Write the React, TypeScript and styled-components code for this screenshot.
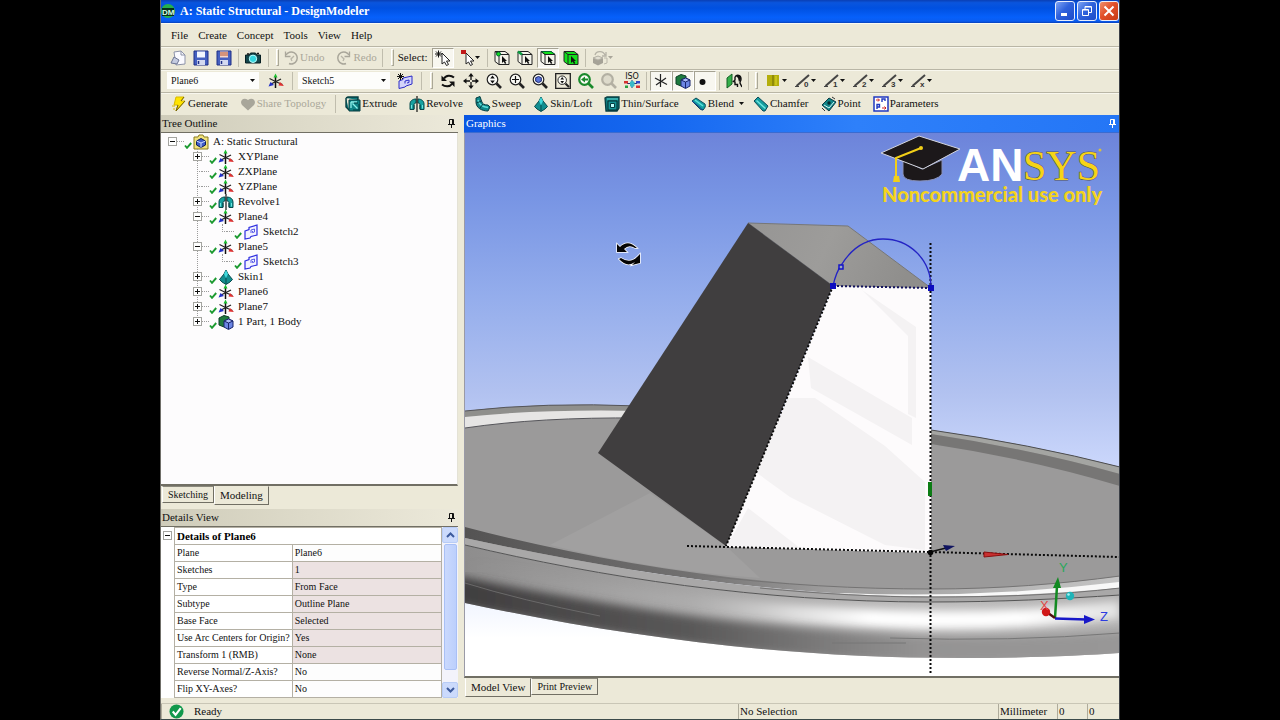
import React from "react";
import styled, { createGlobalStyle, css } from "styled-components";

const GlobalStyle = createGlobalStyle`
  *, *::before, *::after { box-sizing: border-box; }
  body { margin: 0; background: #000; }
  button, select, table { font: inherit; color: inherit; }
`;

const serif = `"Liberation Serif", "Noto Sans CJK TC", serif`;

const AppWindow = styled.div`
  width: 75%;
  min-height: 100vh;
  margin: 0 auto;
  display: flex;
  flex-direction: column;
  background: #ece9d8;
  border-left: 1px solid #6f6e68;
  border-right: 1px solid #3b3f46;
  border-bottom: 1px solid #3b4a4a;
  font-family: ${serif};
  font-size: 11px;
  line-height: 15px;
  color: #111;
`;

/* ---------- title bar ---------- */

const TitleBar = styled.header`
  display: flex;
  align-items: center;
  height: 23px;
  padding-bottom: 2px;
  background: linear-gradient(#0a3fb4, #0a55dd 12%, #0050e0 35%, #0660fb 75%, #0a5cf0 92%, #0840b8);
`;

const TitleText = styled.h1`
  flex: 1;
  margin: 0 0 0 5px;
  font-size: 12px;
  line-height: 20px;
  color: #fff;
`;

const CaptionButton = styled.button<{ $close?: boolean }>`
  width: 20px;
  height: 20px;
  margin-left: 2px;
  padding: 0;
  border: 1px solid #e8eefc;
  border-radius: 3px;
  background: ${(p) =>
    p.$close
      ? "linear-gradient(135deg, #f0906c, #e2502a 45%, #c83a14)"
      : "linear-gradient(135deg, #7fa4f4, #2f62dc 45%, #1d4bc8)"};
  svg { display: block; margin: 0 auto; }
`;

/* ---------- menu and tool bars ---------- */

const MenuBar = styled.nav`
  display: flex;
  align-items: center;
  gap: 10px;
  height: 23px;
  padding-left: 10px;
  border-top: 1px solid #fbfaf2;
`;

const MenuItem = styled.button`
  padding: 0;
  border: 0;
  background: none;
  line-height: 15px;
`;

const ToolBar = styled.div`
  display: flex;
  align-items: center;
  height: 23px;
  padding: 0 0 1px 6px;
  border-top: 1px solid #b9b6a6;
  box-shadow: inset 0 1px 0 #f8f7ee;
`;

const Group = styled.div<{ $gap?: number; $inset?: number }>`
  display: flex;
  align-items: center;
  gap: ${(p) => p.$gap ?? 1}px;
  padding-left: ${(p) => p.$inset ?? 0}px;
`;

const Divider = styled.span<{ $space?: number }>`
  width: 1px;
  height: 18px;
  margin: 0 ${(p) => p.$space ?? 3}px;
  background: #c0bdad;
`;

const Grip = styled.span`
  width: 3px;
  height: 17px;
  margin: 0 4px 0 3px;
  border: 1px solid;
  border-color: #fff #aaa797 #aaa797 #fff;
`;

const ToolButton = styled.button<{ $pressed?: boolean; $menu?: boolean }>`
  display: flex;
  align-items: center;
  justify-content: center;
  flex: none;
  width: ${(p) => (p.$menu ? 28 : 22)}px;
  height: 20px;
  padding: 0;
  border: 1px solid transparent;
  background: none;
  ${(p) =>
    p.$pressed &&
    css`
      background: #f8f7f0;
      border-color: #a5a292 #fff #fff #a5a292;
    `}
  svg { flex: none; }
`;

const TextButton = styled.button`
  display: flex;
  align-items: center;
  gap: 1px;
  flex: none;
  padding: 0;
  border: 0;
  background: none;
  white-space: nowrap;
  &:disabled { color: #aaa798; }
`;

const MenuCaret = styled.span`
  display: flex;
  margin: 0 -3px 0 4px;
`;

const ToolLabel = styled.span`
  width: 34px;
`;

const Combo = styled.label`
  position: relative;
  display: block;
  width: 92px;
  select {
    appearance: none;
    width: 100%;
    height: 17px;
    padding: 0 4px;
    border: 0;
    border-radius: 0;
    background: #fdfdfb;
    font-size: 10px;
  }
  svg { position: absolute; right: 4px; top: 7px; pointer-events: none; }
`;

/* ---------- work area ---------- */

const WorkArea = styled.main`
  flex: 1;
  display: grid;
  grid-template-columns: 297px 1fr;
  column-gap: 6px;
`;

const Column = styled.div`
  display: flex;
  flex-direction: column;
  min-width: 0;
`;

const PaneHeader = styled.h2<{ $active?: boolean }>`
  display: flex;
  align-items: center;
  justify-content: space-between;
  height: 18px;
  margin: 0;
  padding: 0 3px 0 1px;
  font-size: 11px;
  font-weight: normal;
  line-height: 15px;
  border-bottom: 1px solid #716f64;
  background: linear-gradient(90deg, #cfccba, #dedbca 50%, #ece9da);
  ${(p) =>
    p.$active &&
    css`
      padding-left: 2px;
      color: #fff;
      border-bottom-color: #3a6bd0;
      background: linear-gradient(90deg, #0a56e2, #1668f0 30%, #2e80fa 60%, #2476f6);
    `}
`;

const TreePane = styled.section`
  flex: 1;
  padding: 1px 0 0 7px;
  background: #fdfcfd;
  border-right: 1px solid #e4e2d6;
  border-bottom: 2px solid #716f64;
`;

const Branch = styled.ul`
  position: relative;
  margin: 0;
  padding: 0;
  list-style: none;
  & & { padding-left: 25px; }
  & &::before {
    content: "";
    position: absolute;
    left: 29px;
    top: 0;
    bottom: 7px;
    border-left: 1px dotted #9c9c9c;
  }
`;

const TreeRow = styled.div`
  display: flex;
  align-items: center;
  height: 15px;
`;

const Toggle = styled.button`
  position: relative;
  flex: none;
  width: 9px;
  height: 9px;
  padding: 0;
  border: 1px solid #a4a4a0;
  background: #fff;
  svg { display: block; }
`;

const ToggleGap = styled.span`
  width: 5px;
  margin-left: 4px;
  border-top: 1px dotted #9c9c9c;
`;

const Stem = styled.span`
  width: 7px;
  border-top: 1px dotted #9c9c9c;
`;

const CheckSlot = styled.span`
  display: flex;
  align-self: flex-end;
  width: 9px;
`;

const NodeLabel = styled.span`
  margin-left: 4px;
`;

const TabStrip = styled.div<{ $tall?: boolean }>`
  display: flex;
  align-items: flex-start;
  height: ${(p) => (p.$tall ? 25 : 23)}px;
  padding-left: 1px;
`;

const Tab = styled.button<{ $current?: boolean }>`
  height: ${(p) => (p.$current ? 19 : 17)}px;
  padding: 0 5px;
  border: 1px solid;
  border-color: ${(p) => (p.$current ? "transparent" : "#8a887c")} #716f64 #716f64 #fff;
  background: #ece9d8;
  font-size: ${(p) => (p.$current ? 11 : 10)}px;
  line-height: 15px;
`;

const DetailsPane = styled.section`
  display: flex;
  margin-bottom: 5px;
  background: #fff;
`;

const DetailsTable = styled.table`
  flex: 1;
  border-collapse: collapse;
  table-layout: fixed;
  font-size: 10px;
  line-height: 14px;
  th, td {
    height: 17px;
    padding: 0 2px 1px;
    border: 1px solid #b4b0a4;
    text-align: left;
    font-weight: normal;
    white-space: nowrap;
  }
  thead th { font-size: 11px; font-weight: bold; color: #000; }
`;

const GutterCell = styled.td`
  && { width: 13px; padding: 0 1px; border-color: transparent #b4b0a4 transparent transparent; }
`;

const ValueCell = styled.td<{ $locked?: boolean }>`
  width: 151px;
  background: ${(p) => (p.$locked ? "#ece2e2" : "#fdfdfd")};
`;

const ScrollTrack = styled.div`
  display: flex;
  flex-direction: column;
  width: 16px;
  background: #f3f3fb;
`;

const ScrollArrow = styled.button`
  display: flex;
  align-items: center;
  justify-content: center;
  height: 16px;
  padding: 0;
  border: 1px solid #b8ccf6;
  border-radius: 2px;
  background: #cbdafc;
`;

const ScrollThumb = styled.div`
  flex: 1;
  margin: 1px 1px 12px 2px;
  border: 1px solid #a9c0f6;
  border-radius: 2px;
  background: linear-gradient(90deg, #cad9fd, #bccffc);
`;

const Viewport = styled.section`
  flex: 1;
  display: flex;
  border-left: 1px solid #9a9aa6;
  border-bottom: 2px solid #716f64;
  svg { display: block; width: 100%; height: auto; }
`;

const StatusBar = styled.footer`
  display: flex;
  gap: 3px;
  height: 16px;
  border-top: 1px solid #c9c6b6;
`;

const StatusPane = styled.div<{ $width?: number }>`
  display: flex;
  align-items: center;
  flex: ${(p) => (p.$width ? `0 0 ${p.$width}px` : "1")};
  padding-left: 1px;
  border-left: 1px solid #aeab9b;
  gap: 10px;
`;

/* ---------- icons ---------- */

const Svg = ({ children }: { children: React.ReactNode }) => (
  <svg width="16" height="16" viewBox="0 0 16 16" fill="none" aria-hidden="true">
    {children}
  </svg>
);

const Caret = ({ color = "#111" }: { color?: string }) => (
  <svg width="5" height="3" viewBox="0 0 5 3" aria-hidden="true">
    <path d="M0 0h5L2.500 3z" fill={color} />
  </svg>
);

const PinIcon = () => (
  <svg width="7" height="9" viewBox="0 0 7 9" fill="none" aria-hidden="true">
    <path d="M1.500 .5h4v5M1.500 .5v5M0 5.500h7M3.500 5.500v3.500M4.500 1v4" stroke="currentColor" />
  </svg>
);

const CheckIcon = () => (
  <svg width="8" height="7" viewBox="0 0 8 7" fill="none" aria-hidden="true">
    <path d="M1 3.500l2 2.300L7.200 1" stroke="#1c9a30" strokeWidth="1.900" />
  </svg>
);

const PlaneIcon = () => (
  <Svg>
    <path d="M7.500 3v12" stroke="#111" strokeWidth="1.500" />
    <path d="M1.500 5.500l7 3.500 6 2.500" stroke="#222" strokeWidth="1.200" />
    <path d="M13 6L3 11" stroke="#222" strokeWidth="1.300" />
    <path d="M5.500 4.500L7.500 .5l2 4z" fill="#1cc030" />
    <path d="M.5 13.500l2-4.500 3.500 3z" fill="#2230c8" />
    <path d="M10.500 12.500l1.500-3.500 4 4z" fill="#e03030" />
  </Svg>
);

const SketchIcon = () => (
  <Svg>
    <path d="M2 7l4-1.500V3.500L14 1v10l-6 1.500-1 1.500-5 1z" fill="#f2f2ff" stroke="#2c2ce0" strokeWidth="1.200" />
    <path d="M8 9V6l3.500-1v3l-2 .6V7" stroke="#5a5ae8" />
  </Svg>
);

const RevolveIcon = () => (
  <Svg>
    <path d="M1 13.500V8c0-3 2.500-5 6-5v4c-1.500 0-2 .6-2 2v4.500zM15 13.500V8c0-3-2.500-5-6-5v4c1.500 0 2 .6 2 2v4.500z" fill="#16a0a0" stroke="#064a4c" />
    <path d="M8 0v16" stroke="#111" strokeWidth="1.200" />
    <path d="M5 13V9M11 13V9" stroke="#064a4c" />
    <path d="M2.500 12.500V9M13.500 12.500V9" stroke="#6fe4e0" />
  </Svg>
);

const SkinIcon = () => (
  <Svg>
    <path d="M8 1l2 4 4.500 5.500L12 13l-4 2.500L4 13l-2.500-2.500L6 5z" fill="#128e90" stroke="#064a4c" />
    <path d="M8 1l2 4-2 4-2-4z" fill="#3fd8dc" />
    <path d="M8 9v6" stroke="#064a4c" />
  </Svg>
);

const BodyIcon = () => (
  <Svg>
    <path d="M1 4l5-2.500L11 3v8l-5 2-5-2z" fill="#1d7a3e" stroke="#0e3f26" />
    <path d="M6 7l4.500-2L15 7v6l-4.500 2.500L6 13z" fill="#6c86e4" stroke="#18246c" />
    <path d="M6 7l4.500 2L15 7l-4.500-2z" fill="#aabcf8" stroke="#18246c" />
    <path d="M10.500 9v6" stroke="#18246c" />
  </Svg>
);

const ProjectIcon = () => (
  <Svg>
    <path d="M1 3h4l1-2h4l1 2h4v12H1z" fill="#f0e27c" stroke="#8a7a1c" />
    <path d="M3.500 7L8 4.500 12.500 7v4L8 13.500 3.500 11z" fill="#3f5cc8" stroke="#0d1c58" />
    <path d="M3.500 7L8 9l4.500-2M8 9v4.500" stroke="#cfdcff" />
  </Svg>
);

const ExtrudeIcon = () => (
  <Svg>
    <path d="M1 2l2-1h10v3M1 2v9l3 3" stroke="#053c40" strokeWidth="1.400" fill="#0f7c7e" />
    <path d="M4 4h11v11H4z" fill="#0f8486" stroke="#053c40" />
    <path d="M6 6h6M6 6v6M7.500 7.500l5 5" stroke="#8ff0ea" strokeWidth="1.300" />
    <path d="M14 8v6H8M9 7h4" stroke="#053c40" />
  </Svg>
);

const SweepIcon = () => (
  <Svg>
    <path d="M1 2l4-1.500 1.500 4.500C7.500 8 9 9 13 9l2 2-2 4C7 15 1 12 1 6z" fill="#11898a" stroke="#053c40" />
    <path d="M3 4c1 4 4 7 10 7.500" stroke="#5fe0dc" strokeWidth="1.400" />
    <path d="M1.500 7l5-2M5 12l3-4" stroke="#053c40" />
  </Svg>
);

const ThinIcon = () => (
  <Svg>
    <path d="M1 2l2-1h12v11l-2 3H2z" fill="#0e7a7c" stroke="#053c40" strokeWidth="1.300" />
    <path d="M4 5h9v9H4z" fill="#149294" stroke="#042c30" />
    <path d="M6.500 7.500h4v4h-4z" fill="#bff" stroke="#053c40" />
    <path d="M3 3h11" stroke="#5fe0dc" />
  </Svg>
);

const BlendIcon = () => (
  <Svg>
    <path d="M1 5l4-3 9 6c1 2 0 4-2 6-1 0-3-.5-4-2z" fill="#14a0a2" stroke="#0a4a58" />
    <path d="M1 5l8 6.500c1 1 2 2 3 2.500" stroke="#1c3c90" />
    <path d="M4 4l8 6" stroke="#5fe0dc" strokeWidth="1.500" />
  </Svg>
);

const ChamferIcon = () => (
  <Svg>
    <path d="M1 5l4-4 10 9-3 5h-2z" fill="#149c9e" stroke="#0a4a58" />
    <path d="M3.500 4.500l9 8" stroke="#6fe6e0" strokeWidth="1.500" />
  </Svg>
);

const PointIcon = () => (
  <Svg>
    <path d="M1 9l7-7 7 4-7 9z" fill="#128688" stroke="#0a3a44" />
    <path d="M3 9l5 3 5-6" stroke="#d8f8f6" />
    <circle cx="8" cy="7" r="1.700" fill="#052c30" />
    <path d="M1 12l3 3M11 1l3 2" stroke="#333" />
  </Svg>
);

const ParametersIcon = () => (
  <Svg>
    <path d="M1 1h14v14H1z" fill="#fff" stroke="#2038c0" strokeWidth="1.500" />
    <path d="M3 4h3M5 2.500L6.500 4 5 5.500M9 12h4M11.500 10.500L13 12l-1.500 1.500" stroke="#d02020" />
    <path d="M9 6V3h3v2M4 13V8.500h2.500V11H4" stroke="#2038c0" strokeWidth="1.400" />
  </Svg>
);

const BoltIcon = () => (
  <Svg>
    <path d="M5 1h8l-3 4h4L5 15l2-6H3z" fill="#ffe400" stroke="#d8b800" />
    <path d="M13 1l-3 4M14 5L5 15l2-6" stroke="#77650a" />
    <path d="M1 10h3M2 13h2" stroke="#d8b800" />
  </Svg>
);

const HeartIcon = () => (
  <Svg>
    <path d="M8 14.500L2 9C-1 5 3.500 .5 8 4 12.500 .5 17 5 14 9z" fill="#a8a69a" />
  </Svg>
);

const NewIcon = () => (
  <Svg>
    <path d="M4 2l7-1 4 4v9l-9 1z" fill="#fafaff" stroke="#8d93a8" />
    <path d="M11 1v4h4" stroke="#8d93a8" />
    <path d="M1 13l3-6 5 3-2 4z" fill="#c4cbe0" stroke="#6d7694" />
  </Svg>
);

const SaveIcon = ({ striped }: { striped?: boolean }) => (
  <Svg>
    <path d="M1 1h14v14H1z" fill="#4560c0" stroke="#1f2f86" />
    <path d="M4 1.500h8v6H4z" fill={striped ? "#f6d6c8" : "#f2f6ff"} />
    {striped && <path d="M4 3h8M4 5h8" stroke="#b05030" />}
    <path d="M4 10h8v5H4z" fill="#d4daf0" />
    <path d="M5.500 11v3" stroke="#1f2f86" strokeWidth="1.500" />
  </Svg>
);

const CameraIcon = () => (
  <Svg>
    <path d="M.5 5H4l1.500-2h5L12 5h3.500v8H.5z" fill="#14464c" stroke="#071e22" />
    <circle cx="8" cy="8.800" r="3.700" fill="#35d4dc" stroke="#bff" />
    <path d="M2 4h2M12 3.500h2" stroke="#111" strokeWidth="1.500" />
  </Svg>
);

const TurnIcon = ({ redo }: { redo?: boolean }) => (
  <Svg>
    <g transform={redo ? "translate(16 0) scale(-1 1)" : undefined}>
      <path d="M3 5A6 6 0 1 1 6 13.500" stroke="#a9a69a" strokeWidth="1.500" />
      <path d="M2.500 1.500v5h5" stroke="#a9a69a" strokeWidth="1.300" />
      <path d="M11 6l-3 3 1 2" stroke="#b8b5a8" strokeWidth="1.300" />
    </g>
  </Svg>
);

const PointerIcon = ({ red }: { red?: boolean }) => (
  <Svg>
    <path d="M7 3v11l2.500-2 2 3.500 2-1-2-3.500H15z" fill="#fff" stroke="#222" />
    {red ? (
      <path d="M2 0h5v4H2z" fill="#c01818" />
    ) : (
      <path d="M0 4h7M3.500 .5v7M1 1.500l5 5M6 1.500l-5 5" stroke="#111" />
    )}
  </Svg>
);

const FilterCube = ({ kind }: { kind: "point" | "edge" | "face" | "body" }) => {
  const green = "#12e01c";
  return (
    <Svg>
      <path d="M1 1.500h10l4 3v10H5l-4-3z" fill={kind === "body" ? green : "#f4f3ea"} stroke="#222" />
      {kind === "face" && <path d="M1 1.500h10l4 3H5z" fill={green} stroke="#063" />}
      <path d="M1 1.500l4 3h10M5 4.500v10" stroke="#222" />
      {kind === "point" && <circle cx="4.500" cy="4" r="2" fill={green} stroke="#063" />}
      {kind === "edge" && <path d="M1 1.500l4 3" stroke="#0a9c40" strokeWidth="2.500" />}
      <path d="M8 6v7l1.600-1.400L11 14l1.300-.7-1.200-2.300H13z" fill="#111" />
    </Svg>
  );
};

const GreyCube = () => (
  <Svg>
    <path d="M1 8l5-2 5 2v5l-5 2.500L1 13z" fill="#a5a297" />
    <path d="M1 8l5-2 5 2-5 2z" fill="#e2dfd2" stroke="#b5b2a6" />
    <path d="M3 5c1-4 8-5 10 0M14 2v4h-4" stroke="#b5b2a6" strokeWidth="1.300" />
    <path d="M12 8h3v5l-3 1" stroke="#bbb8ab" />
  </Svg>
);

const NewSketchIcon = () => (
  <Svg>
    <path d="M2 8l4-1.500V5l9-2v8l-6 2-1 1-6 1.500z" fill="#d4d4fa" stroke="#2c2cc8" />
    <path d="M8 10.500V8l4-1v2.500L10 10" stroke="#2c2cc8" />
    <path d="M0 3.500h7M3.500 0v7M1 1l5 5M6 1L1 6" stroke="#111" />
  </Svg>
);

const RotateIcon = () => (
  <Svg>
    <path d="M4 5.500C6 2 11 2 14 4.500M2 11.500C5 14 10 14 12 11" stroke="#111" strokeWidth="2" />
    <path d="M1.500 2.500V8H7zM14.500 14V8.500H9z" fill="#111" />
  </Svg>
);

const PanIcon = () => (
  <Svg>
    <path d="M8 3v4M8 9v4M3 8h4M9 8h4" stroke="#111" strokeWidth="1.300" />
    <path d="M8 0l2.700 3.500H5.300zM8 16l2.700-3.500H5.300zM0 8l3.500-2.700v5.400zM16 8l-3.500-2.700v5.400z" fill="#111" />
  </Svg>
);

type LensKind = "zoom" | "plus" | "box" | "fit" | "green" | "grey";
const LensIcon = ({ kind }: { kind: LensKind }) => {
  const rim = kind === "green" ? "#1a8a2c" : kind === "grey" ? "#b3b0a3" : "#222";
  return (
    <Svg>
      {kind === "fit" && <path d="M.7 .7h14.600v14.600H.7z" stroke="#222" strokeWidth="1.300" />}
      <g transform={kind === "fit" ? "translate(2 2) scale(.8)" : undefined}>
        <path d="M10.500 10.500L15 15" stroke={rim} strokeWidth="2.600" />
        <circle cx="6.500" cy="6.500" r="5.300" fill={kind === "grey" ? "#dddacb" : "#fbfbf6"} stroke={rim} strokeWidth={kind === "green" || kind === "grey" ? 2.200 : 1.200} />
        {(kind === "zoom" || kind === "fit") && (
          <path d="M6.500 2.500l2.300 3H4.200zM6.500 10.500l2.300-3H4.200z" fill="#111" />
        )}
        {kind === "plus" && <path d="M6.500 3v7M3 6.500h7" stroke="#111" strokeWidth="1.200" />}
        {kind === "box" && <path d="M3.700 4.700l2.800-1.200 2.800 1.200v3.500L6.500 9.700 3.700 8.200z" fill="#5a74d8" stroke="#18246c" />}
        {kind === "green" && <path d="M3 6.500l4-3v2h3v2H7v2z" fill="#1a8a2c" />}
      </g>
    </Svg>
  );
};

const IsoText = styled.span`
  font: 8px/7px "DejaVu Sans", sans-serif;
`;
const IsoButton = styled(ToolButton)`
  flex-direction: column;
`;
const IsoGlyph = () => (
  <svg width="16" height="9" viewBox="0 0 16 9" fill="none" aria-hidden="true">
    <path d="M3 3.500h10M8 0v8" stroke="#237" />
    <path d="M0 1h4v2.500H0zM12 5.500h4V8h-4z" fill="#d43030" />
    <path d="M1 5.500h3V8H1z" fill="#28a040" />
    <path d="M6 2l2-1.500L10.500 2v4L8 7.500 6 6z" fill="#39b8c8" />
    <path d="M12 1h4v2.500h-4z" fill="#3048c8" />
  </svg>
);

const AxesIcon = () => (
  <Svg>
    <path d="M7.500 1v13M2 5l12 6.500M13 5L3 12" stroke="#222" strokeWidth="1.200" />
  </Svg>
);

const DotIcon = () => (
  <Svg>
    <circle cx="5.500" cy="9" r="3" fill="#111" />
  </Svg>
);

const LookIcon = () => (
  <Svg>
    <path d="M1 5l5-4v10l-5 4z" fill="#35b04a" stroke="#146024" />
    <path d="M9 4c2-3 6-2 6 2 0 2-1 2-1 4l2 4M9 4v3l-1.500 1.500L9 9v2.500h2.500V14" stroke="#111" strokeWidth="1.400" />
    <path d="M10 3c3-2 5 0 5 3l-2 3-1-4z" fill="#111" />
  </Svg>
);

const SwatchIcon = () => (
  <Svg>
    <path d="M1 2h12v11H1z" fill="#b4ae0c" />
    <path d="M7 2v11" stroke="#6c6806" />
    <path d="M10 3v9" stroke="#c8c41c" strokeWidth="2" />
  </Svg>
);

const EdgeText = styled.text`
  font: bold 8px "Liberation Sans", sans-serif;
`;
const EdgeIcon = ({ mark }: { mark: string }) => (
  <Svg>
    <path d="M1.500 13L14 2" stroke="#444" strokeWidth="2" />
    <path d="M0 13.500h4" stroke="#444" />
    <EdgeText x="9" y="14" fill="#333">{mark}</EdgeText>
  </Svg>
);

const IconText = styled.text`
  font: bold 8px "Liberation Sans", sans-serif;
  fill: #d8ffe4;
`;
const AppIcon = () => (
  <svg width="14" height="16" viewBox="0 0 14 16" aria-hidden="true">
    <circle cx="7" cy="8" r="7" fill="#25b04c" />
    <path d="M1 5h12v8H1z" fill="#06301a" />
    <IconText x="1" y="12">DM</IconText>
  </svg>
);

const ReadyMark = styled.svg`
  margin-left: 6px;
`;
const ReadyIcon = () => (
  <ReadyMark width="15" height="15" viewBox="0 0 16 16" fill="none" aria-hidden="true">
    <circle cx="8" cy="8" r="7.500" fill="#12984c" />
    <path d="M4 8l3 3.500L12.500 4.500" stroke="#fff" strokeWidth="2.200" />
  </ReadyMark>
);

/* ---------- data ---------- */

type TreeNode = { label: string; icon: () => React.ReactElement; open?: boolean; leaf?: boolean; children?: TreeNode[] };

const tree: TreeNode = {
  label: "A: Static Structural",
  icon: ProjectIcon,
  open: true,
  children: [
    { label: "XYPlane", icon: PlaneIcon },
    { label: "ZXPlane", icon: PlaneIcon, leaf: true },
    { label: "YZPlane", icon: PlaneIcon, leaf: true },
    { label: "Revolve1", icon: RevolveIcon },
    { label: "Plane4", icon: PlaneIcon, open: true, children: [{ label: "Sketch2", icon: SketchIcon, leaf: true }] },
    { label: "Plane5", icon: PlaneIcon, open: true, children: [{ label: "Sketch3", icon: SketchIcon, leaf: true }] },
    { label: "Skin1", icon: SkinIcon },
    { label: "Plane6", icon: PlaneIcon },
    { label: "Plane7", icon: PlaneIcon },
    { label: "1 Part, 1 Body", icon: BodyIcon },
  ],
};

const details: { name: string; value: string; locked?: boolean }[] = [
  { name: "Plane", value: "Plane6" },
  { name: "Sketches", value: "1", locked: true },
  { name: "Type", value: "From Face", locked: true },
  { name: "Subtype", value: "Outline Plane", locked: true },
  { name: "Base Face", value: "Selected", locked: true },
  { name: "Use Arc Centers for Origin?", value: "Yes", locked: true },
  { name: "Transform 1 (RMB)", value: "None", locked: true },
  { name: "Reverse Normal/Z-Axis?", value: "No" },
  { name: "Flip XY-Axes?", value: "No" },
];

const features: { label: string; icon: () => React.ReactElement; menu?: boolean }[] = [
  { label: "Extrude", icon: ExtrudeIcon },
  { label: "Revolve", icon: RevolveIcon },
  { label: "Sweep", icon: SweepIcon },
  { label: "Skin/Loft", icon: SkinIcon },
  { label: "Thin/Surface", icon: ThinIcon },
  { label: "Blend", icon: BlendIcon, menu: true },
  { label: "Chamfer", icon: ChamferIcon },
  { label: "Point", icon: PointIcon },
  { label: "Parameters", icon: ParametersIcon },
];

const ToggleMark = ({ open }: { open?: boolean }) => (
  <svg width="7" height="7" viewBox="0 0 7 7" aria-hidden="true">
    <path d={open ? "M1 3.500h5" : "M1 3.500h5M3.500 1v5"} stroke="#111" />
  </svg>
);

const TreeItem = ({ node }: { node: TreeNode }) => {
  const Icon = node.icon;
  return (
    <li>
      <TreeRow>
        {node.leaf ? (
          <ToggleGap />
        ) : (
          <Toggle aria-label={`${node.open ? "Collapse" : "Expand"} ${node.label}`}>
            <ToggleMark open={node.open} />
          </Toggle>
        )}
        <Stem />
        <CheckSlot><CheckIcon /></CheckSlot>
        <Icon />
        <NodeLabel>{node.label}</NodeLabel>
      </TreeRow>
      {node.children && (
        <Branch>
          {node.children.map((child) => <TreeItem key={child.label} node={child} />)}
        </Branch>
      )}
    </li>
  );
};

/* ---------- 3D scene ---------- */

const BrandSans = styled.text`
  font: bold 46px "Liberation Sans", sans-serif;
  fill: #fff;
`;
const BrandSerif = styled.text`
  font: 42px "Liberation Serif", serif;
  fill: #f6d416;
  stroke: #55545c;
  stroke-width: 1px;
  paint-order: stroke;
`;
const BrandNote = styled.text`
  font: 900 20px Lato, "Liberation Sans", sans-serif;
  fill: #f4d31c;
`;
const AxisText = styled.text`
  font: 13px "Liberation Sans", sans-serif;
`;

const Scene = () => (
  <svg viewBox="465 133 654 543" role="img" aria-label="Model of a wedge standing on a disc">
    <defs>
      <linearGradient id="sky" x1="0" y1="133" x2="0" y2="676" gradientUnits="userSpaceOnUse">
        <stop offset="0" stopColor="#6d84da" />
        <stop offset=".12" stopColor="#7895e4" />
        <stop offset=".3" stopColor="#94adec" />
        <stop offset=".48" stopColor="#b2c2f0" />
        <stop offset=".62" stopColor="#ccd8fc" />
        <stop offset=".85" stopColor="#eef3ff" />
        <stop offset=".93" stopColor="#ffffff" />
      </linearGradient>
      <linearGradient id="top" x1="760" y1="225" x2="900" y2="290" gradientUnits="userSpaceOnUse">
        <stop offset="0" stopColor="#979695" />
        <stop offset=".45" stopColor="#9d9c9a" />
        <stop offset="1" stopColor="#8f8e8c" />
      </linearGradient>
      <linearGradient id="rimBase" x1="465" y1="0" x2="1119" y2="0" gradientUnits="userSpaceOnUse">
        <stop offset="0" stopColor="#8e8d8d" />
        <stop offset=".35" stopColor="#a6a5a5" />
        <stop offset=".7" stopColor="#bcbbbb" />
        <stop offset="1" stopColor="#b2b1b1" />
      </linearGradient>
      <linearGradient id="rimDark" x1="465" y1="0" x2="1119" y2="0" gradientUnits="userSpaceOnUse">
        <stop offset="0" stopColor="#403e3f" />
        <stop offset=".35" stopColor="#5a5959" />
        <stop offset=".55" stopColor="#7c7b7b" />
        <stop offset=".7" stopColor="#949393" />
        <stop offset="1" stopColor="#989797" />
      </linearGradient>
      <linearGradient id="rimLight" x1="465" y1="0" x2="1119" y2="0" gradientUnits="userSpaceOnUse">
        <stop offset="0" stopColor="#b8b8b8" stopOpacity="0" />
        <stop offset=".35" stopColor="#c4c4c4" stopOpacity=".25" />
        <stop offset=".5" stopColor="#f0f0f0" stopOpacity=".7" />
        <stop offset=".62" stopColor="#fff" />
        <stop offset=".85" stopColor="#fff" />
        <stop offset="1" stopColor="#e2e2e2" />
      </linearGradient>
      <linearGradient id="lipDark" x1="465" y1="0" x2="1119" y2="0" gradientUnits="userSpaceOnUse">
        <stop offset="0" stopColor="#545353" />
        <stop offset=".35" stopColor="#727171" />
        <stop offset=".55" stopColor="#9d9c9c" />
        <stop offset="1" stopColor="#c4c4c4" />
      </linearGradient>
      <filter id="soft" x="-5%" y="-30%" width="110%" height="160%"><feGaussianBlur stdDeviation="4" /></filter>
      <clipPath id="rimClip">
        <path d="M465 545C600 577 760 602 930 602C1000 602 1060 599 1120 595V653C1080 656 1020 658 960 658C780 658 620 636 465 603Z" />
      </clipPath>
    </defs>

    <path d="M465 133h655v544H465z" fill="url(#sky)" />

    {/* disc floor */}
    <path d="M465 411Q545 402 632 406L931 430Q1030 444 1120 467V595C1000 605 800 600 465 545Z" fill="#9b9a9a" />
    <path d="M465 411Q545 402 640 406V411Q540 409 465 417Z" fill="#8f8f8c" />
    <path d="M465 417Q540 409 640 411V418Q540 417 465 428Z" fill="#e6e5e4" />
    <path d="M465 411Q545 402 640 406M465 428Q540 417 640 418" stroke="#55555a" fill="none" />
    <path d="M931 430Q1030 444 1120 467V474Q1030 449 931 434Z" fill="#a4a5a2" />
    <path d="M931 434Q1030 449 1120 474V486Q1030 459 931 444Z" fill="#777675" />
    <path d="M931 430Q1030 444 1120 467" stroke="#4c4d50" fill="none" />
    <path d="M550 545L650 493L726 546L760 578Q650 570 550 545Z" fill="#a1a0a0" />

    {/* inner lip */}
    <path d="M465 527C600 562 760 589 930 589C1000 589 1060 584 1120 576V588C1060 595 1000 597 930 597C760 595 600 567 465 538Z" fill="url(#lipDark)" />
    <path d="M840 593Q980 599 1120 582V588Q980 601 840 594Z" fill="#f8f8f8" />
    <path d="M465 538C600 567 760 595 930 597C1000 597 1060 595 1120 588V595C1060 600 1000 602 930 602C760 602 600 577 465 545Z" fill="#a9a8a8" />
    <path d="M700 575C780 585 860 589 930 589C1000 589 1060 584 1120 576M760 588C820 594 880 597 930 597C1000 597 1060 595 1120 588" stroke="#747373" fill="none" />

    {/* outer rim */}
    <g clipPath="url(#rimClip)">
      <path d="M465 540h655v125H465z" fill="url(#rimBase)" />
      <path d="M465 568C600 595 760 617 930 620C1000 621 1060 616 1120 610" stroke="url(#rimLight)" strokeWidth="18" fill="none" filter="url(#soft)" />
      <path d="M455 590C620 623 780 648 960 650C1020 650 1080 648 1130 645" stroke="url(#rimDark)" strokeWidth="28" fill="none" filter="url(#soft)" />
    </g>
    <path d="M465 545C600 577 760 602 930 602C1000 602 1060 599 1120 595" stroke="#555" fill="none" />
    <path d="M832 643L906 643M890 638Q1010 642 1120 633" stroke="#777" fill="none" />
    <path d="M465 583Q520 600 600 616" stroke="#6a6969" fill="none" />

    {/* wedge */}
    <path d="M748 223L848 226L931 288L833 286Z" fill="url(#top)" stroke="#777" />
    <path d="M748 223L833 286L726 546L598 453Z" fill="#403e3f" />
    <path d="M833 286L931 288V553L726 547Z" fill="#fdfbfc" />
    <path d="M808 357L912 418V445L811 388ZM788 398H815L885 446L925 482V550L885 545L790 497L757 473ZM862 290L916 327V418L908 414V336Z" fill="#f4f2f3" />
    <path d="M748 508L800 548L727 546Z" fill="#f4f2f3" />

    {/* plane axes */}
    <g stroke="#0a0a0a" strokeWidth="2" strokeDasharray="2 2" fill="none">
      <path d="M930.500 243V674" />
      <path d="M687 546L930 552L1119 557" />
      <path d="M833 286L726 546" />
      <path d="M833 286L931 288" stroke="#12125c" />
    </g>
    <path d="M833 286Q836 272 842 264C854 245 868 239 883 239C908 239 931 258 931 288" stroke="#2424c4" strokeWidth="1.300" fill="none" />
    <path d="M830 283h6v6h-6zM928 285h6v6h-6z" fill="#0c0cc0" />
    <path d="M839 265h4v4h-4z" fill="#9ab" stroke="#1414c8" strokeWidth="1.500" />
    <path d="M928 482h4v14h-4z" fill="#0c7c14" />
    <path d="M930 552L946 548" stroke="#111" strokeWidth="1.500" />
    <path d="M943 545L955 546L946 551Z" fill="#101460" />
    <circle cx="930.500" cy="552.500" r="2.800" fill="#050505" />
    <path d="M984 552L1008 554.500L984 557Z" fill="#c83030" stroke="#8a1010" />

    {/* orientation triad */}
    <path d="M1055 618L1057 586" stroke="#128a22" strokeWidth="2.500" />
    <path d="M1053 588L1058 577L1061 588Z" fill="#128a22" />
    <path d="M1055 618.500L1086 619.500" stroke="#1818c8" strokeWidth="2.500" />
    <path d="M1084 615L1095 619.500L1084 624Z" fill="#1818c8" />
    <path d="M1055 618L1048 613" stroke="#501010" strokeWidth="2.500" />
    <circle cx="1046" cy="612" r="4.200" fill="#d01818" />
    <circle cx="1070" cy="596" r="4.200" fill="#20b4b8" />
    <circle cx="1068.500" cy="594.500" r="1.300" fill="#a8f2f2" />
    <AxisText x="1059" y="572" fill="#2aa85a">Y</AxisText>
    <AxisText x="1040" y="610" fill="#e04848">X</AxisText>
    <AxisText x="1100" y="621" fill="#2c3ce0">Z</AxisText>

    {/* rotate cursor */}
    <g stroke="#fff" strokeWidth="1.500" paintOrder="stroke" fill="#050505">
      <path d="M617 244L620 247Q628 239 637 248L635 248Q629 244 624 249L627 252H617Z" />
      <path d="M640 263V254L637 257Q630 264 621 258L619 259Q627 268 635 262L632 265Z" />
    </g>

    {/* licence badge */}
    <path d="M903 160V174Q903 181 920 181T942 174V160L922 169Z" fill="#1c181a" stroke="#8890b8" />
    <path d="M881 153L919 136L960 149L923 169Z" fill="#1c181a" stroke="#d4d6e0" />
    <path d="M921 148L896 158V182" stroke="#f2cf18" strokeWidth="2" fill="none" />
    <path d="M894 176h5l1 6h-7z" fill="#f2cf18" />
    <circle cx="921" cy="148" r="2" fill="#f2cf18" />
    <BrandSans x="957" y="181">AN</BrandSans>
    <BrandSerif x="1023" y="180">SYS</BrandSerif>
    <circle cx="1100" cy="150" r="1.500" fill="#d8c040" />
    <BrandNote x="882" y="202">Noncommercial use only</BrandNote>
  </svg>
);

/* ---------- application ---------- */

export default function App() {
  return (
    <>
      <GlobalStyle />
      <AppWindow>
        <TitleBar>
          <AppIcon />
          <TitleText>A: Static Structural - DesignModeler</TitleText>
          <CaptionButton aria-label="Minimize">
            <svg width="14" height="14" viewBox="0 0 14 14"><path d="M3 9h6v3H3z" fill="#fff" /></svg>
          </CaptionButton>
          <CaptionButton aria-label="Restore">
            <svg width="14" height="14" viewBox="0 0 14 14" fill="none" stroke="#fff"><path d="M5 5V2.500h6.500v6H9M2.500 5.500h6v6h-6zM5 3h6M3 6h5" /></svg>
          </CaptionButton>
          <CaptionButton $close aria-label="Close">
            <svg width="14" height="14" viewBox="0 0 14 14" stroke="#fff" strokeWidth="2"><path d="M2.500 2.500l9 9M11.500 2.500l-9 9" /></svg>
          </CaptionButton>
        </TitleBar>

        <MenuBar aria-label="Main menu">
          {["File", "Create", "Concept", "Tools", "View", "Help"].map((m) => <MenuItem key={m}>{m}</MenuItem>)}
        </MenuBar>

        <ToolBar role="toolbar" aria-label="Standard">
          <Group>
            <ToolButton aria-label="New"><NewIcon /></ToolButton>
            <ToolButton aria-label="Save"><SaveIcon /></ToolButton>
            <ToolButton aria-label="Save project"><SaveIcon striped /></ToolButton>
          </Group>
          <Divider />
          <ToolButton aria-label="Image capture"><CameraIcon /></ToolButton>
          <Divider $space={4} />
          <Grip />
          <Group $gap={12}>
            <TextButton disabled><TurnIcon />Undo</TextButton>
            <TextButton disabled><TurnIcon redo />Redo</TextButton>
          </Group>
          <Divider $space={5} />
          <Grip />
          <ToolLabel>Select:</ToolLabel>
          <Group $gap={2}>
            <ToolButton $pressed aria-label="New selection"><PointerIcon /></ToolButton>
            <ToolButton $menu aria-label="Select mode"><PointerIcon red /><Caret /></ToolButton>
          </Group>
          <Divider />
          <Group>
            <ToolButton aria-label="Filter points"><FilterCube kind="point" /></ToolButton>
            <ToolButton aria-label="Filter edges"><FilterCube kind="edge" /></ToolButton>
            <ToolButton $pressed aria-label="Filter faces"><FilterCube kind="face" /></ToolButton>
            <ToolButton aria-label="Filter bodies"><FilterCube kind="body" /></ToolButton>
          </Group>
          <Divider />
          <ToolButton $menu disabled aria-label="Extend selection"><GreyCube /><Caret color="#a9a69a" /></ToolButton>
        </ToolBar>

        <ToolBar role="toolbar" aria-label="Planes and view">
          <Combo>
            <select aria-label="Active plane"><option>Plane6</option></select>
            <Caret />
          </Combo>
          <Group $inset={6}>
            <ToolButton aria-label="New plane"><PlaneIcon /></ToolButton>
          </Group>
          <Divider $space={5} />
          <Combo>
            <select aria-label="Active sketch"><option>Sketch5</option></select>
            <Caret />
          </Combo>
          <Group $inset={4}>
            <ToolButton aria-label="New sketch"><NewSketchIcon /></ToolButton>
          </Group>
          <Divider $space={5} />
          <Grip />
          <Group>
            <ToolButton aria-label="Rotate"><RotateIcon /></ToolButton>
            <ToolButton aria-label="Pan"><PanIcon /></ToolButton>
            <ToolButton aria-label="Zoom"><LensIcon kind="zoom" /></ToolButton>
            <ToolButton aria-label="Box zoom"><LensIcon kind="plus" /></ToolButton>
            <ToolButton aria-label="Zoom to body"><LensIcon kind="box" /></ToolButton>
            <ToolButton aria-label="Zoom to fit"><LensIcon kind="fit" /></ToolButton>
            <ToolButton aria-label="Previous view"><LensIcon kind="green" /></ToolButton>
            <ToolButton disabled aria-label="Next view"><LensIcon kind="grey" /></ToolButton>
            <IsoButton><IsoText>ISO</IsoText><IsoGlyph /></IsoButton>
          </Group>
          <Divider />
          <Group $gap={0}>
            <ToolButton $pressed aria-label="Display plane"><AxesIcon /></ToolButton>
            <ToolButton $pressed aria-label="Display model"><BodyIcon /></ToolButton>
            <ToolButton $pressed aria-label="Display points"><DotIcon /></ToolButton>
          </Group>
          <Divider />
          <ToolButton aria-label="Look at"><LookIcon /></ToolButton>
          <Divider />
          <Grip />
          <Group>
            <ToolButton $menu aria-label="Face colour"><SwatchIcon /><Caret /></ToolButton>
            {["0", "1", "2", "3", "x"].map((m) => (
              <ToolButton $menu key={m} aria-label={`Edge display ${m}`}><EdgeIcon mark={m} /><Caret /></ToolButton>
            ))}
          </Group>
        </ToolBar>

        <ToolBar role="toolbar" aria-label="Features">
          <Group $gap={12} $inset={4}>
            <TextButton><BoltIcon />Generate</TextButton>
            <TextButton disabled><HeartIcon />Share Topology</TextButton>
          </Group>
          <Divider $space={9} />
          <Group $gap={12}>
            {features.map(({ label, icon: Icon, menu }) => (
              <TextButton key={label}>
                <Icon />{label}
                {menu && <MenuCaret><Caret /></MenuCaret>}
              </TextButton>
            ))}
          </Group>
        </ToolBar>

        <WorkArea>
          <Column>
            <PaneHeader>Tree Outline<PinIcon /></PaneHeader>
            <TreePane aria-label="Tree outline">
              <Branch><TreeItem node={tree} /></Branch>
            </TreePane>
            <TabStrip>
              <Tab>Sketching</Tab>
              <Tab $current>Modeling</Tab>
            </TabStrip>
            <PaneHeader>Details View<PinIcon /></PaneHeader>
            <DetailsPane aria-label="Details">
              <DetailsTable>
                <thead>
                  <tr>
                    <GutterCell><Toggle aria-label="Collapse details"><ToggleMark open /></Toggle></GutterCell>
                    <th colSpan={2}>Details of Plane6</th>
                  </tr>
                </thead>
                <tbody>
                  {details.map((d) => (
                    <tr key={d.name}>
                      <GutterCell />
                      <th scope="row">{d.name}</th>
                      <ValueCell $locked={d.locked}>{d.value}</ValueCell>
                    </tr>
                  ))}
                </tbody>
              </DetailsTable>
              <ScrollTrack>
                <ScrollArrow aria-label="Scroll up">
                  <svg width="9" height="6" viewBox="0 0 9 6" fill="none" stroke="#3c5a9c" strokeWidth="2"><path d="M1 5l3.500-3.500L8 5" /></svg>
                </ScrollArrow>
                <ScrollThumb />
                <ScrollArrow aria-label="Scroll down">
                  <svg width="9" height="6" viewBox="0 0 9 6" fill="none" stroke="#3c5a9c" strokeWidth="2"><path d="M1 1l3.500 3.500L8 1" /></svg>
                </ScrollArrow>
              </ScrollTrack>
            </DetailsPane>
          </Column>

          <Column>
            <PaneHeader $active>Graphics<PinIcon /></PaneHeader>
            <Viewport><Scene /></Viewport>
            <TabStrip $tall>
              <Tab $current>Model View</Tab>
              <Tab>Print Preview</Tab>
            </TabStrip>
          </Column>
        </WorkArea>

        <StatusBar>
          <StatusPane>
            <ReadyIcon />
            Ready
          </StatusPane>
          <StatusPane $width={257}>No Selection</StatusPane>
          <StatusPane $width={56}>Millimeter</StatusPane>
          <StatusPane $width={27}>0</StatusPane>
          <StatusPane $width={32}>0</StatusPane>
        </StatusBar>
      </AppWindow>
    </>
  );
}
